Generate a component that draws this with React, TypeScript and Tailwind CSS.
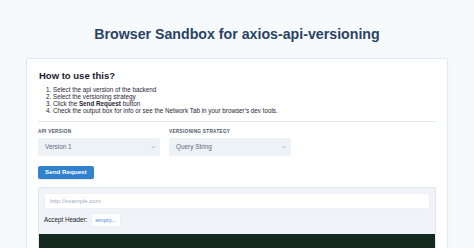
import { ChevronDown } from "lucide-react";

const steps = [
  <>Select the api version of the backend</>,
  <>Select the versioning strategy</>,
  <>
    Click the <strong className="font-bold">Send Request</strong> button
  </>,
  <>Check the output box for info or see the Network Tab in your browser's dev tools.</>,
];

function SelectBox({ label, value }: { label: string; value: string }) {
  return (
    <div className="flex w-[122px] flex-col">
      <span className="text-[4.7px] font-bold uppercase leading-[6px] tracking-[0.06em] text-[#4a5568]">{label}</span>
      <div className="mt-[3.6px] flex h-[17.4px] items-center justify-between rounded-[2px] bg-[#edf2f7] pl-[7px] pr-[5px]">
        <span className="text-[6.4px] leading-none text-[#5f6b7c]">{value}</span>
        <ChevronDown className="h-[4.5px] w-[4.5px] text-[#6b7788]" strokeWidth={3} />
      </div>
    </div>
  );
}

export default function App() {
  return (
    <div className="h-[248px] overflow-hidden bg-[#f7fafc] pt-[26px] font-['Liberation_Sans',Arial,sans-serif]">
      <h1 className="text-center text-[14.2px] font-bold leading-[16px] text-[#2a4365]">
        Browser Sandbox for axios-api-versioning
      </h1>

      <div className="mx-auto mt-[16px] w-[422px] rounded-[2px] border border-[#e2e8f0] bg-white px-[11px] pt-[10px] shadow-[0_1px_2px_rgba(0,0,0,0.04)]">
        <h2 className="ml-[1px] text-[9.5px] font-bold leading-[13px] text-[#1a202c]">How to use this?</h2>
        <ol className="mt-[3.5px] list-decimal pl-[15px] text-[6.3px] leading-[7px] text-[#1f2633]">
          {steps.map((s, i) => (
            <li key={i}>{s}</li>
          ))}
        </ol>

        <hr className="mt-[7.5px] border-0 border-t border-[#e2e8f0]" />

        <div className="mt-[6.7px] flex gap-[9px]">
          <SelectBox label="Api Version" value="Version 1" />
          <SelectBox label="Versioning Strategy" value="Query String" />
        </div>

        <button className="mt-[10px] flex h-[13.3px] items-center rounded-[2px] bg-[#3182ce] px-[7px] text-[6.25px] font-bold leading-none text-white shadow-[0_1px_1px_rgba(0,0,0,0.1)]">
          Send Request
        </button>

        <div className="mt-[7.7px] border border-b-0 border-[#e2e8f0] bg-[#f0f3f7]">
          <div className="px-[5px] pt-[5px] pb-[6.7px]">
            <div className="flex h-[16.3px] items-center border border-[#edf0f4] bg-white pl-[5px]">
              <span className="text-[6px] leading-none text-[#a0aec0]">http://example.com</span>
            </div>
            <div className="mt-[4.3px] flex h-[14px] items-center gap-[3.3px]">
              <span className="text-[6.3px] leading-none text-[#1a202c]">Accept Header:</span>
              <span className="flex h-[14px] items-center border border-[#edf0f4] bg-white px-[3.5px] text-[6.1px] leading-none text-[#4a8fd6]">
                empty...
              </span>
            </div>
          </div>
          <div className="h-[40px] bg-[#13291d] pl-[8px] pt-[6px]">
            <span className="text-[6.3px] leading-[8px] text-[#c2d366]">Response Data</span>
          </div>
        </div>
      </div>
    </div>
  );
}
